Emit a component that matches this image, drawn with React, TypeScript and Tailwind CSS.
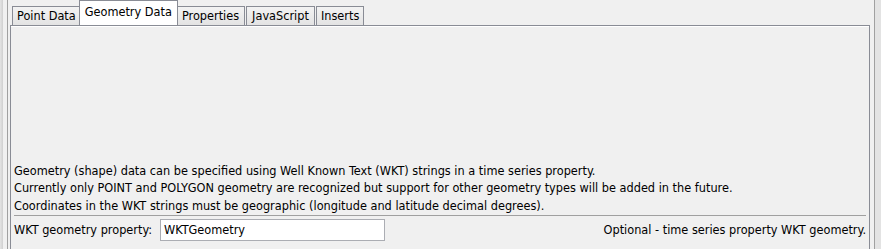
import React from "react";

const font = { fontFamily: '"DejaVu Sans Condensed", Tahoma, "DejaVu Sans", sans-serif' };

function Tab({ label, selected, px }: { label: string; selected?: boolean; px: string }) {
  if (selected) {
    return (
      <div className={`relative z-10 -mx-[2px] h-[25px] self-end border border-b-0 border-[#898c95] bg-white pt-[3px] text-[12.6px] leading-[16px] text-black ${px}`}>
        {label}
      </div>
    );
  }
  return (
    <div className={`h-[19px] self-end border border-b-0 border-[#898c95] bg-gradient-to-b from-[#f3f3f3] to-[#e3e3e3] pt-[1px] text-[12.6px] leading-[16px] text-black ${px}`}>
      {label}
    </div>
  );
}

export default function App() {
  return (
    <div className="flex h-[249px] w-[881px] overflow-hidden bg-[#f0f0f0] text-black" style={font}>
      <div className="w-[3px] bg-gradient-to-r from-[#e4e4e4] to-[#cfcfcf]" />
      <div className="w-[4px]" />
      <div className="w-[1px] bg-[#a0a0a0]" />
      <div className="w-[2px]" />
      <div className="flex w-[860px] flex-col">
        <div className="flex h-[25px] pl-[2px]">
          <Tab label="Point Data" px="px-[4px]" />
          <Tab label="Geometry Data" selected px="px-[5px]" />
          <Tab label="Properties" px="px-[5px]" />
          <div className="w-[1px]" />
          <Tab label="JavaScript" px="px-[5px]" />
          <div className="w-[1px]" />
          <Tab label="Inserts" px="px-[4px]" />
        </div>
        <div className="flex flex-1 flex-col border border-b-0 border-[#898c95]">
          <div className="h-[2px] border-t border-white" />
          <div className="flex flex-1 flex-col px-[3px]">
            <div className="flex-1" />
            <div className="text-[12.6px] leading-[17.5px]">
              <div>Geometry (shape) data can be specified using Well Known Text (WKT) strings in a time series property.</div>
              <div>Currently only POINT and POLYGON geometry are recognized but support for other geometry types will be added in the future.</div>
              <div>Coordinates in the WKT strings must be geographic (longitude and latitude decimal degrees).</div>
            </div>
            <div className="mt-[1px] h-[1px] bg-[#a0a0a0]" />
            <div className="mb-[8px] mt-[3px] flex h-[22px] items-center text-[12.6px]">
              <div className="w-[146px]">WKT geometry property:</div>
              <div className="flex h-[22px] w-[225px] items-center border border-[#abadb3] bg-white px-[3px]">WKTGeometry</div>
              <div className="flex-1 text-right">Optional - time series property WKT geometry.</div>
            </div>
          </div>
        </div>
      </div>
      <div className="w-[4px]" />
      <div className="w-[1px] bg-[#a0a0a0]" />
      <div className="flex-1 bg-[#e3e3e3]" />
    </div>
  );
}
